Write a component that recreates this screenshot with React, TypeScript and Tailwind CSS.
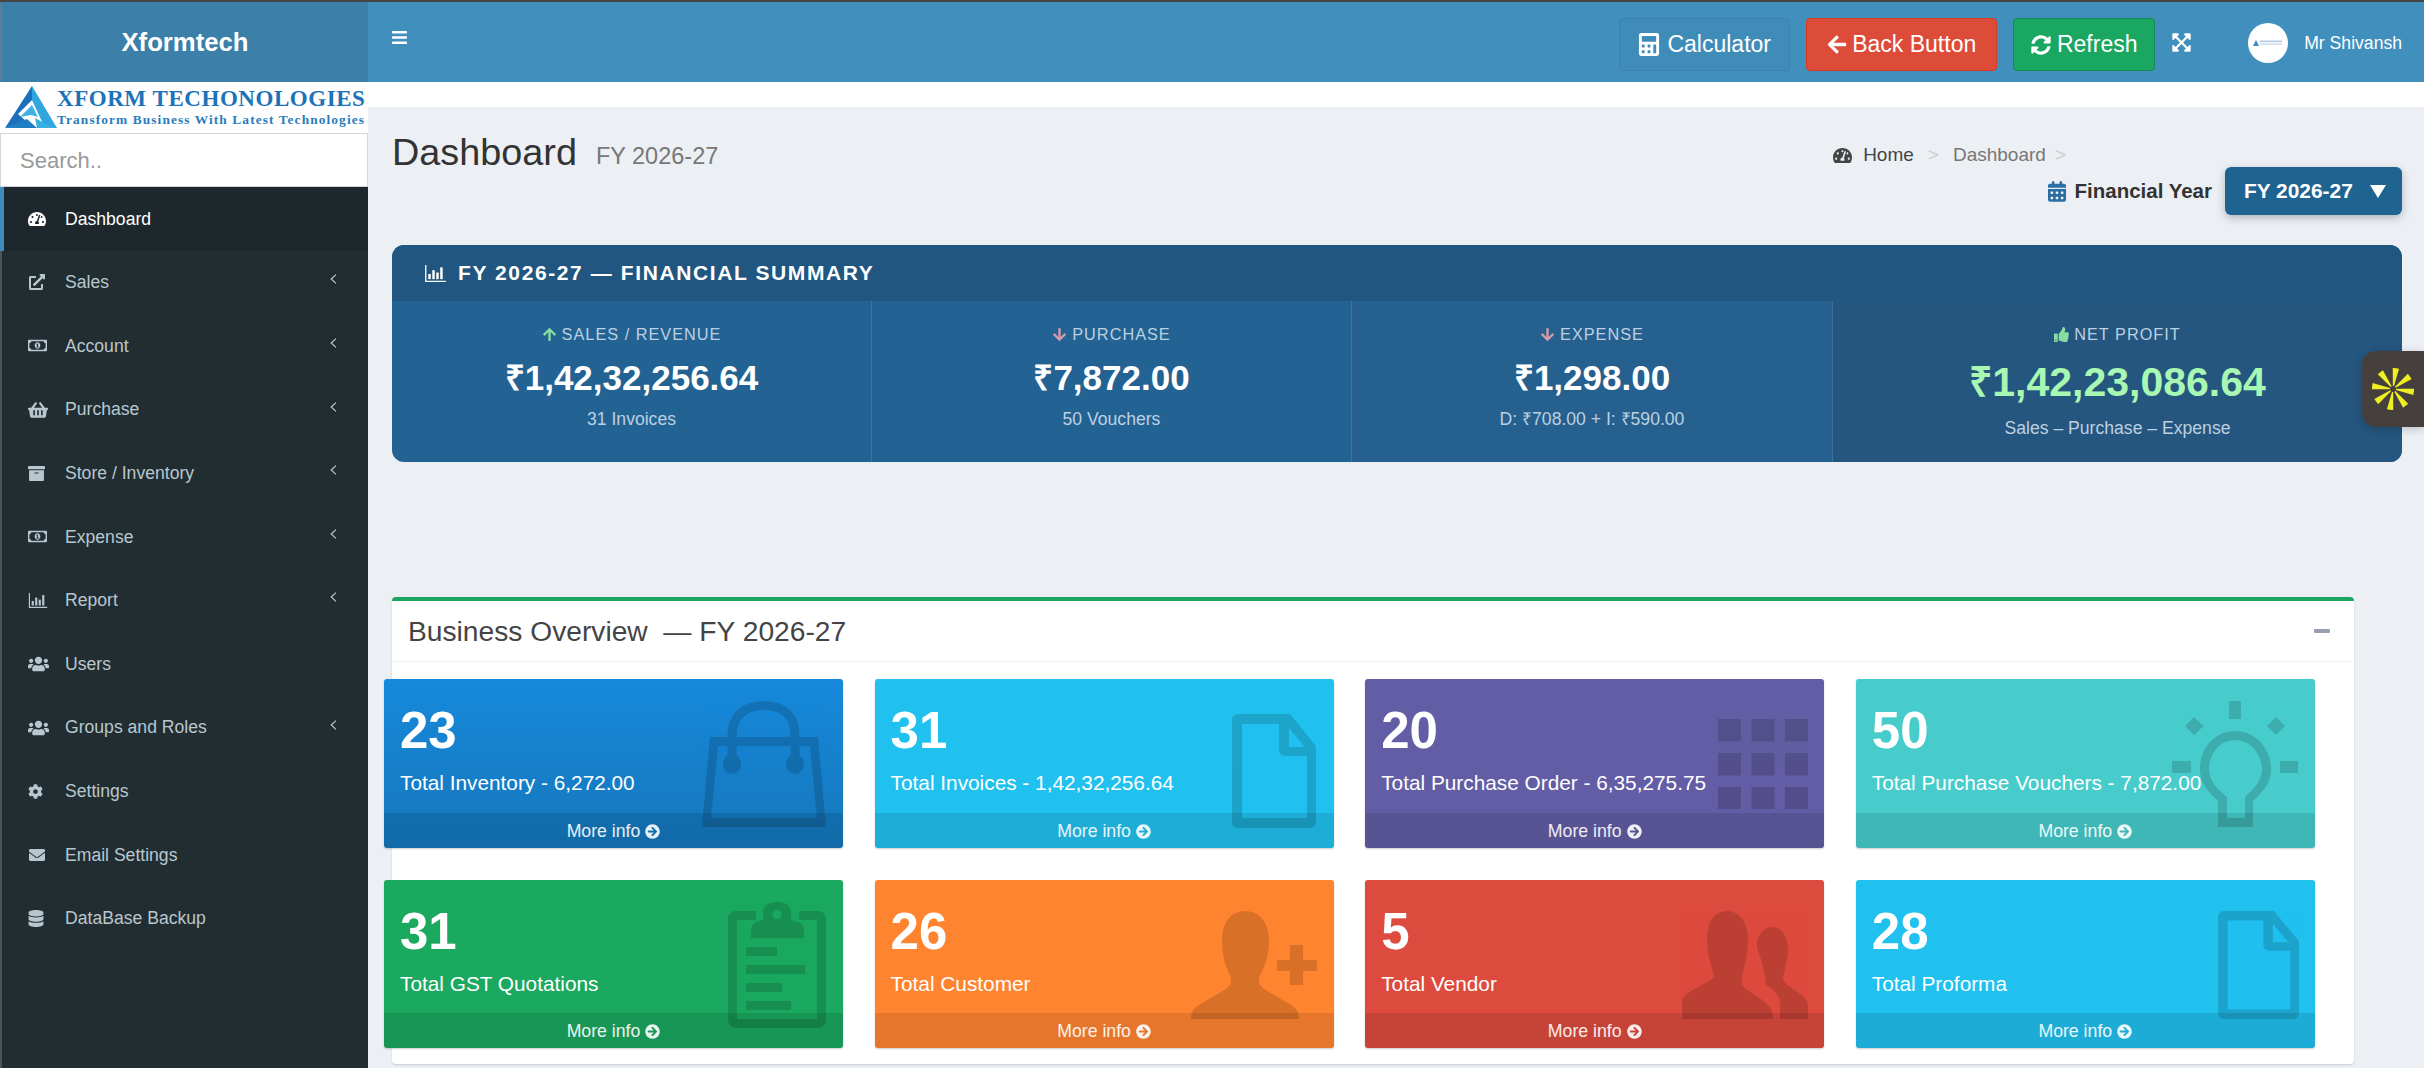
import React from 'react';
import {
  FaTachometerAlt, FaExternalLinkAlt, FaRegMoneyBillAlt, FaShoppingBasket, FaArchive, FaUsers, FaCog,
  FaEnvelope, FaDatabase, FaCalculator, FaArrowLeft, FaSyncAlt, FaExpandArrowsAlt,
  FaCalendarAlt, FaThumbsUp, FaArrowUp, FaArrowDown, FaArrowCircleRight, FaBars,
} from 'react-icons/fa';

function BarChart({ className }: { className?: string }) {
  return (
    <svg viewBox="0 0 22 18" className={className} fill="currentColor">
      <path d="M0 0h1.4v16.6H22V18H0z" />
      <rect x="3.4" y="9.5" width="2.6" height="5.5" />
      <rect x="7.6" y="5.5" width="2.6" height="9.5" />
      <rect x="11.8" y="8" width="2.6" height="7" />
      <rect x="16" y="2.5" width="2.6" height="12.5" />
    </svg>
  );
}

function Chevron() {
  return (
    <svg viewBox="0 0 7 10" className="ml-auto mr-[31px] -mt-[6px] w-[7px] h-[10px] text-[#b8c7ce]" fill="none" stroke="currentColor" strokeWidth="1.2">
      <path d="M6 0.6L1.2 5L6 9.4" />
    </svg>
  );
}

const menu: { label: string; icon: React.ReactNode; arrow?: boolean; active?: boolean }[] = [
  { label: 'Dashboard', icon: <FaTachometerAlt className="w-[18px] h-[18px]" />, active: true },
  { label: 'Sales', icon: <FaExternalLinkAlt className="w-[18px] h-[16px]" />, arrow: true },
  { label: 'Account', icon: <FaRegMoneyBillAlt className="w-[19px] h-[17px]" />, arrow: true },
  { label: 'Purchase', icon: <FaShoppingBasket className="w-[20px] h-[18px]" />, arrow: true },
  { label: 'Store / Inventory', icon: <FaArchive className="w-[17px] h-[17px]" />, arrow: true },
  { label: 'Expense', icon: <FaRegMoneyBillAlt className="w-[19px] h-[17px]" />, arrow: true },
  { label: 'Report', icon: <BarChart className="w-[20px] h-[15px]" />, arrow: true },
  { label: 'Users', icon: <FaUsers className="w-[21px] h-[18px]" /> },
  { label: 'Groups and Roles', icon: <FaUsers className="w-[21px] h-[18px]" />, arrow: true },
  { label: 'Settings', icon: <FaCog className="w-[15px] h-[15px]" /> },
  { label: 'Email Settings', icon: <FaEnvelope className="w-[18px] h-[16px]" /> },
  { label: 'DataBase Backup', icon: <FaDatabase className="w-[16px] h-[17px]" /> },
];

function Bag() {
  return (
    <svg viewBox="0 0 124 126" className="absolute left-[318px] top-[22px] w-[124px] h-[126px] opacity-15">
      <path fillRule="evenodd" d="M8 36H116L124 126H0ZM16 45L9 117H115L108 45Z" />
      <path d="M30 60V34C30 14 44 4.5 62 4.5S93 14 93 34V60" fill="none" stroke="#000" strokeWidth="9" />
      <ellipse cx="30" cy="63" rx="9" ry="10" />
      <ellipse cx="93" cy="63" rx="9" ry="10" />
    </svg>
  );
}

function Doc({ className }: { className: string }) {
  return (
    <svg viewBox="0 0 84 114" preserveAspectRatio="none" className={className}>
      <path
        fillRule="evenodd"
        d="M6 0H58L84 32V108a6 6 0 0 1-6 6H6a6 6 0 0 1-6-6V6a6 6 0 0 1 6-6ZM10 10V104H75V42H54Q47 42 47 35V10ZM57 14V33H73Z"
      />
    </svg>
  );
}

function Grid3() {
  const cells = [0, 1, 2, 3, 4, 5, 6, 7, 8];
  return (
    <svg viewBox="0 0 90 90" className="absolute left-[353px] top-[40px] w-[90px] h-[90px] opacity-15">
      {cells.map((i) => (
        <rect key={i} x={(i % 3) * 33.5} y={Math.floor(i / 3) * 34} width="23" height="22.5" />
      ))}
    </svg>
  );
}

function Bulb() {
  return (
    <svg viewBox="0 0 126 126" className="absolute left-[316px] top-[22px] w-[126px] h-[126px] opacity-15">
      <rect x="57" y="0" width="12" height="18" />
      <path d="M22 16L31.5 25L22 34L13 25Z" />
      <path d="M104 16L113 25L104 34L95 25Z" />
      <rect x="0" y="60" width="19" height="12" />
      <rect x="108" y="60" width="18" height="12" />
      <path
        fillRule="evenodd"
        d="M63 30C42 30 28 48 28 68C28 84 38 92 46 100V126H81V100C89 92 99 84 99 68C99 48 84 30 63 30ZM63 39C79 39 90 54 90 68C90 80 81 89 73 96V117H55V96C46 89 37 80 37 68C37 54 47 39 63 39Z"
      />
    </svg>
  );
}

function Clipboard() {
  return (
    <svg viewBox="0 0 98 126" className="absolute left-[344px] top-[22px] w-[98px] h-[126px] opacity-15">
      <path d="M28 9H8a8 8 0 0 0-8 8V118a8 8 0 0 0 8 8H90a8 8 0 0 0 8-8V17a8 8 0 0 0-8-8H71V18H89V117H9V18H28Z" />
      <path
        fillRule="evenodd"
        d="M23 36V26Q24 20 35 18V10Q36 0 49 0Q62 0 63 10V18Q75 20 76 26V36ZM49 8a4.5 4.5 0 1 0 .01 0Z"
      />
      <rect x="18" y="45" width="31" height="9" />
      <rect x="18" y="63" width="59" height="9" />
      <rect x="18" y="81" width="36" height="9" />
      <rect x="18" y="99" width="45" height="9" />
    </svg>
  );
}

const personD =
  'M54 0C70 0 78 14 78 30C78 48 72 58 68 66V72C70 78 84 84 100 94Q108 98 108 108H0Q0 98 8 94C24 84 38 78 40 72V66C36 58 31 48 31 30C31 14 38 0 54 0Z';

function PersonAdd() {
  return (
    <svg viewBox="0 0 126 108" className="absolute left-[316px] top-[31px] w-[126px] h-[108px] opacity-15">
      <path d={personD} />
      <path d="M99 34H112V49H126V60H112V74H99V60H86V49H99Z" />
    </svg>
  );
}

function Stalker() {
  return (
    <svg viewBox="0 0 126 108" className="absolute left-[317px] top-[31px] w-[126px] h-[108px] opacity-15">
      <path d="M45 0C58 0 66 12 66 28C66 44 62 56 60 66V74C64 80 76 84 86 94Q91 98 91 108H0V90Q0 86 6 82C18 74 30 70 32 66C30 56 25 44 25 28C25 12 32 0 45 0Z" />
      <path d="M90 16C100 16 106 26 106 38C106 50 102 60 101 68C102 74 116 80 122 86Q126 90 126 96V108H98V92C98 84 90 78 83 73C85 68 82 62 80 52C78 44 75 40 75 34C75 24 82 16 90 16Z" />
    </svg>
  );
}

const cards = [
  { n: '23', t: 'Total Inventory - 6,272.00', bg: 'bg-linear-to-b from-[#1789dc] to-[#1577bb]', icon: <Bag /> },
  { n: '31', t: 'Total Invoices - 1,42,32,256.64', bg: 'bg-[#21c1ef]', icon: <Doc className="absolute left-[357px] top-[35px] w-[84px] h-[114px] opacity-15" /> },
  { n: '20', t: 'Total Purchase Order - 6,35,275.75', bg: 'bg-[#625da4]', icon: <Grid3 /> },
  { n: '50', t: 'Total Purchase Vouchers - 7,872.00', bg: 'bg-[#47cccb]', icon: <Bulb /> },
  { n: '31', t: 'Total GST Quotations', bg: 'bg-[#1ba85f]', icon: <Clipboard /> },
  { n: '26', t: 'Total Customer', bg: 'bg-[#ff8430]', icon: <PersonAdd /> },
  { n: '5', t: 'Total Vendor', bg: 'bg-[#dd4b3e]', icon: <Stalker /> },
  { n: '28', t: 'Total Proforma', bg: 'bg-[#20c0ef]', icon: <Doc className="absolute left-[362px] top-[31px] w-[81px] h-[108px] opacity-15" /> },
];

function StatCol({
  label, icon, value, sub, cls,
}: { label: string; icon: React.ReactNode; value: string; sub: string; cls: string }) {
  return (
    <div className={`flex flex-col items-center pt-[22px] border-r border-white/10 ${cls}`}>
      <div className="flex items-center gap-[5px] text-[16.3px] leading-[22px] tracking-[1px] text-[#bcd0e1]">
        {icon}
        {label}
      </div>
      <div className="mt-[12px] text-[35px] leading-[42px] font-bold text-white">{value}</div>
      <div className="mt-[9px] text-[17.6px] leading-[22px] text-[#bcd0e1]">{sub}</div>
    </div>
  );
}

export default function App() {
  return (
    <div className="w-full h-[1068px] overflow-hidden flex flex-col bg-[#ecf0f5] font-['Liberation_Sans',Arial,sans-serif] text-[#333]">
      <div className="h-[2px] bg-[#454545] shrink-0" />
      <header className="h-[80px] flex shrink-0 bg-[#408fbc]">
        <div className="w-[368px] flex items-center justify-center bg-[#3c7fa9] border-l-[2px] border-[#5c7f96] text-white text-[25.7px] font-bold">
          Xformtech
        </div>
        <div className="flex-1 flex items-start pl-[24px] pr-[22px]">
          <FaBars className="mt-[27px] w-[15px] h-[17px] text-white" />
          <div className="ml-auto flex items-start mt-[16px]">
            <button className="h-[53px] w-[171px] flex items-center justify-center gap-[7px] rounded-[4px] border border-[#3b83ad] bg-[#3f8cb9] text-white text-[23px]">
              <FaCalculator className="w-[22px] h-[23px]" />
              Calculator
            </button>
            <button className="ml-[16px] h-[53px] w-[191px] flex items-center justify-center gap-[5px] rounded-[4px] border border-[#d73925] bg-[#dd4b39] text-white text-[23px]">
              <FaArrowLeft className="w-[20px] h-[21px]" />
              Back Button
            </button>
            <button className="ml-[16px] h-[53px] w-[142px] flex items-center justify-center gap-[6px] rounded-[4px] border border-[#138a50] bg-[#1aa761] text-white text-[23px]">
              <FaSyncAlt className="w-[20px] h-[20px]" />
              Refresh
            </button>
            <FaExpandArrowsAlt className="ml-[16px] mt-[14px] w-[21px] h-[21px] text-white" />
            <div className="ml-[56px] mt-[5px] w-[40px] h-[40px] rounded-full bg-white flex items-center justify-center">
              <svg viewBox="0 0 30 8" className="w-[30px] h-[8px]">
                <path d="M0 7L3 1L6 7Z" fill="#3f87c6" />
                <rect x="7" y="1.5" width="22" height="1.6" fill="#b3c6df" />
                <rect x="7" y="4.4" width="22" height="1.4" fill="#cbd8e9" />
              </svg>
            </div>
            <span className="ml-[16px] mt-[14px] text-white text-[17.6px] leading-[22px]">Mr Shivansh</span>
          </div>
        </div>
      </header>
      <div className="flex-1 flex min-h-0">
        <aside className="w-[368px] shrink-0 flex flex-col bg-[#222d32] border-l-[2px] border-[#4a5358]">
          <div className="h-[51px] -ml-[2px] bg-white flex items-center pl-[5px] shrink-0">
            <svg viewBox="0 0 52 42" className="w-[52px] h-[42px] shrink-0 -mt-[2px]">
              <path d="M27 0L52 42H34L38 38L27 14Z" fill="#2fa6dd" />
              <path d="M27 0L0 42L21 35L13 28L27 14Z" fill="#1b70bb" />
              <path d="M15 31L27 19L33 31L26 29Z" fill="#3fb2e3" />
              <path d="M0 42L22 33L32 42Z" fill="#1f7fc4" />
              <path d="M30 32L41 38L52 42H32Z" fill="#35b0e0" />
            </svg>
            <div className="flex flex-col font-['Liberation_Serif',serif] text-[#1d72b8]">
              <span className="text-[23px] leading-[24px] font-bold whitespace-nowrap tracking-[0.55px]">XFORM TECHONOLOGIES</span>
              <span className="text-[13.4px] leading-[17px] font-bold whitespace-nowrap tracking-[1.09px] text-[#2a7cbd]">Transform Business With Latest Technologies</span>
            </div>
          </div>
          <div className="h-[54px] -ml-[2px] shrink-0 bg-white border border-[#d2d6de] flex items-center pl-[19px] text-[22px] text-[#999]">
            Search..
          </div>
          <nav className="flex flex-col -ml-[2px]">
            {menu.map((m) => (
              <div
                key={m.label}
                className={`h-[63.6px] flex items-center border-l-[4px] text-[17.6px] ${
                  m.active ? 'bg-[#1e282c] border-[#3c8dbc] text-white' : 'border-transparent text-[#b8c7ce]'
                }`}
              >
                <span className="ml-[24px] w-[37px] flex items-center">{m.icon}</span>
                <span>{m.label}</span>
                {m.arrow && <Chevron />}
              </div>
            ))}
          </nav>
        </aside>
        <main className="flex-1 min-w-0 flex flex-col">
          <div className="h-[25px] bg-white shrink-0" />
          <div className="h-[138px] shrink-0 flex pl-[24px] pr-[22px]">
            <div className="mt-[23px] flex items-baseline gap-[19px] h-[44px]">
              <h1 className="text-[37.8px] leading-[44px]">Dashboard</h1>
              <span className="text-[23.5px] text-[#777] -translate-y-[1px]">FY 2026-27</span>
            </div>
            <div className="ml-auto flex flex-col items-end">
              <div className="mt-[36px] mr-[336px] h-[24px] flex items-center text-[19px] text-[#444]">
                <FaTachometerAlt className="w-[19px] h-[17px] mr-[11px]" />
                <span>Home</span>
                <span className="mx-[14px] text-[#ccc]">&gt;</span>
                <span className="text-[#777]">Dashboard</span>
                <span className="ml-[9px] text-[#ccc]">&gt;</span>
              </div>
              <div className="flex items-center">
                <FaCalendarAlt className="w-[18px] h-[21px] text-[#2b6ea3] mr-[8px]" />
                <span className="text-[20.5px] font-bold text-[#333]">Financial Year</span>
                <div className="ml-[13px] h-[48px] w-[177px] flex items-center pl-[19px] rounded-[6px] bg-[#1f6391] text-white text-[20.9px] font-bold shadow-[0_3px_8px_rgba(0,0,0,0.25)]">
                  FY 2026-27
                  <span className="ml-auto mr-[16px] w-0 h-0 border-l-[8px] border-r-[8px] border-t-[13px] border-l-transparent border-r-transparent border-t-white" />
                </div>
              </div>
            </div>
          </div>
          <section className="h-[217px] ml-[24px] mr-[22px] shrink-0 rounded-[12px] overflow-hidden flex flex-col bg-[#236394]">
            <div className="h-[56px] shrink-0 bg-[#20567f] flex items-center pl-[32px] text-white font-bold text-[21px] tracking-[1.6px]">
              <BarChart className="w-[23px] h-[17px] mr-[11px]" />
              FY 2026-27 — FINANCIAL SUMMARY
            </div>
            <div className="flex-1 grid grid-cols-[480px_480px_481px_1fr]">
              <StatCol cls="" label="SALES / REVENUE" value="₹1,42,32,256.64" sub="31 Invoices" icon={<FaArrowUp className="w-[15px] h-[15px] text-[#86dfa0]" />} />
              <StatCol cls="" label="PURCHASE" value="₹7,872.00" sub="50 Vouchers" icon={<FaArrowDown className="w-[15px] h-[15px] text-[#d79aa8]" />} />
              <StatCol cls="bg-[#26608f]" label="EXPENSE" value="₹1,298.00" sub="D: ₹708.00 + I: ₹590.00" icon={<FaArrowDown className="w-[15px] h-[15px] text-[#d79aa8]" />} />
              <div className="flex flex-col items-center pt-[22px] bg-[#25567f]">
                <div className="flex items-center gap-[5px] text-[16.3px] leading-[22px] tracking-[1px] text-[#bcd0e1]">
                  <FaThumbsUp className="w-[15px] h-[15px] text-[#86dfa0]" />
                  NET PROFIT
                </div>
                <div className="mt-[14px] text-[41px] leading-[46px] font-bold text-[#a8f7b2]">₹1,42,23,086.64</div>
                <div className="mt-[12px] text-[17.6px] leading-[22px] text-[#bcd0e1]">Sales – Purchase – Expense</div>
              </div>
            </div>
          </section>
          <section className="mt-[135px] ml-[24px] w-[1962px] shrink-0 h-[467px] bg-white rounded-[4px] border-t-[4px] border-[#1ca55f] shadow-[0_1px_2px_rgba(0,0,0,0.15)]">
            <div className="h-[61px] flex items-center pl-[16px] pr-[24px] border-b border-[#f1f1f1] text-[#444]">
              <span className="text-[28.2px] whitespace-pre">Business Overview  — FY 2026-27</span>
              <span className="ml-auto w-[16px] h-[4px] rounded-[1px] bg-[#97a0b3]" />
            </div>
            <div className="mt-[17px] -ml-[8px] grid grid-cols-[repeat(4,459px)] auto-rows-[168.5px] gap-x-[31.6px] gap-y-[32px]">
              {cards.map((c) => (
                <div key={c.t} className={`relative overflow-hidden rounded-[3px] flex flex-col text-white shadow-[0_1px_2px_rgba(0,0,0,0.2)] ${c.bg}`}>
                  {c.icon}
                  <div className="relative flex-1 pl-[16px]">
                    <div className="mt-[22px] text-[51px] leading-[60px] font-bold">{c.n}</div>
                    <div className="mt-[9px] text-[20.8px] leading-[26px] whitespace-nowrap">{c.t}</div>
                  </div>
                  <div className="relative h-[35px] pt-[2px] shrink-0 flex items-center justify-center gap-[5px] text-[17.7px] text-white/90 bg-black/10">
                    More info
                    <FaArrowCircleRight className="w-[15px] h-[15px]" />
                  </div>
                </div>
              ))}
            </div>
          </section>
        </main>
      </div>
      <div className="fixed right-0 top-[351px] w-[62px] h-[76px] rounded-l-[14px] bg-[#45403e] flex items-center justify-center shadow-[0_2px_10px_rgba(0,0,0,0.2)]">
        <svg viewBox="-21 -21 42 42" className="w-[42px] h-[42px]">
          {[0, 45, 90, 135, 180, 225, 270, 315].map((a) => (
            <polygon key={a} points="-0.6,-3 0.6,-3 3.2,-21 -3.2,-21" fill="#eeee22" transform={`rotate(${a + 8})`} />
          ))}
        </svg>
      </div>
    </div>
  );
}
